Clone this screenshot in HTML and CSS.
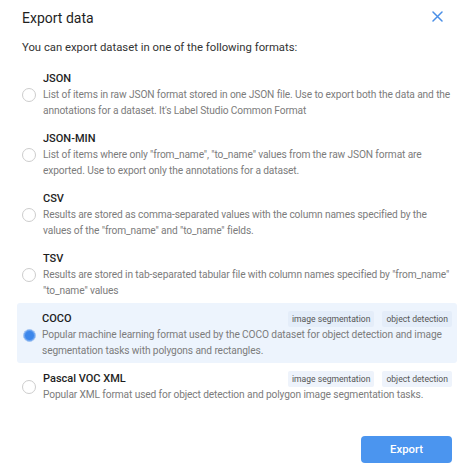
FILE: index.html
```html
<!DOCTYPE html>
<html>
<head>
<meta charset="utf-8">
<link rel="stylesheet" href="styles.css">
</head>
<body>
<div class="modal">
  <div class="header">
    <h1 class="title">Export data</h1>
    <button class="close" aria-label="Close">
      <svg width="11" height="11" viewBox="0 0 11 11"><path d="M1 1L10 10M10 1L1 10" stroke="#4a8fe7" stroke-width="1.5" stroke-linecap="round"/></svg>
    </button>
  </div>
  <p class="intro">You can export dataset in one of the following formats:</p>
  <div class="options">
    <label class="option">
      <span class="radio"></span>
      <div class="body">
        <div class="head"><span class="name">JSON</span></div>
        <div class="desc">List of items in raw JSON format stored in one JSON file. Use to export both the data and the annotations for a dataset. It's Label Studio Common Format</div>
      </div>
    </label>
    <label class="option">
      <span class="radio"></span>
      <div class="body">
        <div class="head"><span class="name">JSON-MIN</span></div>
        <div class="desc">List of items where only "from_name", "to_name" values from the raw JSON format are exported. Use to export only the annotations for a dataset.</div>
      </div>
    </label>
    <label class="option">
      <span class="radio"></span>
      <div class="body">
        <div class="head"><span class="name">CSV</span></div>
        <div class="desc">Results are stored as comma-separated values with the column names specified by the<br>values of the "from_name" and "to_name" fields.</div>
      </div>
    </label>
    <label class="option">
      <span class="radio"></span>
      <div class="body">
        <div class="head"><span class="name">TSV</span></div>
        <div class="desc">Results are stored in tab-separated tabular file with column names specified by "from_name" "to_name" values</div>
      </div>
    </label>
    <label class="option selected">
      <span class="radio"></span>
      <div class="body">
        <div class="head"><span class="name">COCO</span><span class="tags"><span class="tag">image segmentation</span><span class="tag">object detection</span></span></div>
        <div class="desc">Popular machine learning format used by the COCO dataset for object detection and image segmentation tasks with polygons and rectangles.</div>
      </div>
    </label>
    <label class="option">
      <span class="radio"></span>
      <div class="body">
        <div class="head"><span class="name">Pascal VOC XML</span><span class="tags"><span class="tag">image segmentation</span><span class="tag">object detection</span></span></div>
        <div class="desc">Popular XML format used for object detection and polygon image segmentation tasks.</div>
      </div>
    </label>
  </div>
  <div class="footer">
    <button class="export">Export</button>
  </div>
</div>
</body>
</html>
```
FILE: styles.css
```css
html, body {
  margin: 0;
  padding: 0;
  background: #fff;
}
body {
  font-family: Roboto, "Liberation Sans", sans-serif;
  color: #222;
}
.modal {
  width: 474px;
  height: 476px;
  box-sizing: border-box;
  padding: 8px 17px 0 17px;
}
.header {
  display: flex;
  align-items: center;
  justify-content: space-between;
  padding-left: 5px;
  height: 20px;
}
.title {
  margin: 0;
  font-size: 14px;
  font-weight: 400;
  line-height: 20px;
  color: #1f1f1f;
}
.close {
  border: 0;
  background: none;
  padding: 0;
  width: 14px;
  height: 14px;
  display: flex;
  align-items: center;
  justify-content: center;
  margin-right: 13px;
  margin-top: -3px;
}
.intro {
  margin: 11px 0 6px 5px;
  font-size: 11.3px;
  line-height: 18px;
  color: #333;
}
.options {
  display: flex;
  flex-direction: column;
}
.option {
  display: flex;
  align-items: center;
  gap: 7px;
  padding: 8px 4px 4px 5px;
  border-radius: 3px;
}
.option.selected {
  background: #edf4fd;
}
.radio {
  flex: none;
  width: 14px;
  height: 14px;
  box-sizing: border-box;
  border: 1px solid #cdcdcd;
  border-radius: 50%;
  background: #fff;
}
.selected .radio {
  width: 13px;
  height: 13px;
  margin-left: 1px;
  border: 1px solid #a9c9f4;
  background: #3d87eb;
  box-shadow: inset 0 0 0 1px #6aa3f0;
}
.selected .body {
  margin-left: -1px;
}
.body {
  flex: 1;
  min-width: 0;
}
.head {
  display: flex;
  align-items: center;
  justify-content: space-between;
  height: 16px;
}
.name {
  font-size: 11px;
  font-weight: 500;
  line-height: 16px;
  color: #1e1e1e;
}
.tags {
  display: flex;
  gap: 8px;
  margin-right: 1px;
}
.tag {
  font-size: 8.6px;
  line-height: 16px;
  padding: 0 4px;
  background: #e4edf9;
  color: #555;
  border-radius: 2px;
}
.option:not(.selected) .tag {
  background: #eef3fb;
}
.desc {
  font-size: 10.2px;
  letter-spacing: -0.12px;
  line-height: 16px;
  color: #7c7c7c;
}
.footer {
  display: flex;
  justify-content: flex-end;
  margin-top: 29px;
  padding-right: 5px;
}
.export {
  width: 91px;
  height: 27px;
  border: 0;
  border-radius: 4px;
  background: #4b95ef;
  color: #fff;
  font-family: Roboto, "Liberation Sans", sans-serif;
  font-size: 11.3px;
  font-weight: 500;
}
```
